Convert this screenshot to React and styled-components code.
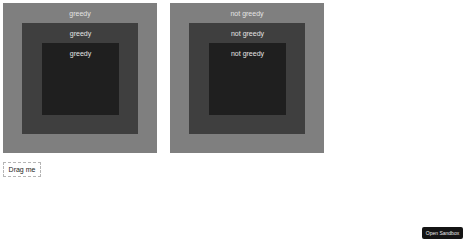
import React from "react";
import styled, { createGlobalStyle } from "styled-components";

const Global = createGlobalStyle`
  html, body { margin: 0; padding: 0; background: #fff; }
  body { padding: 3px; font-family: "Liberation Sans", Arial, sans-serif; }
`;

const Row = styled.div`
  display: flex;
  gap: 13px;
`;

const Box = styled.div`
  display: flex;
  flex-direction: column;
  box-sizing: border-box;
  padding: 0 19px 19px 19px;
  background: ${(p) => p.$bg};
  ${(p) => (p.$outer ? "width: 154px; height: 150px;" : "flex: 1;")}
  ${(p) => (p.$mid ? "padding-left: 20px;" : "")}
`;

const Label = styled.div`
  height: 20px;
  flex: none;
  display: flex;
  align-items: center;
  justify-content: center;
  padding-top: 1px;
  box-sizing: border-box;
  font-size: 7px;
  color: #e4e4e4;
`;

const Drag = styled.button`
  margin-top: 9px;
  width: 38px;
  height: 15px;
  box-sizing: border-box;
  padding: 0;
  background: #fff;
  border: 1px dashed #b5b5b5;
  font-family: "Liberation Sans", Arial, sans-serif;
  font-size: 7px;
  color: #222;
  display: flex;
  align-items: center;
  justify-content: center;
`;

const Sandbox = styled.div`
  position: fixed;
  right: 11px;
  bottom: 9px;
  width: 41px;
  height: 12px;
  border-radius: 2px;
  background: #141414;
  color: #eee;
  font-size: 5px;
  display: flex;
  align-items: center;
  justify-content: center;
`;

function Nest({ text }) {
  return (
    <Box $outer $bg="#7f7f7f">
      <Label>{text}</Label>
      <Box $mid $bg="#3f3f3f">
        <Label>{text}</Label>
        <Box $bg="#1f1f1f">
          <Label>{text}</Label>
        </Box>
      </Box>
    </Box>
  );
}

export default function App() {
  return (
    <>
      <Global />
      <Row>
        <Nest text="greedy" />
        <Nest text="not greedy" />
      </Row>
      <Drag>Drag me</Drag>
      <Sandbox>Open Sandbox</Sandbox>
    </>
  );
}
